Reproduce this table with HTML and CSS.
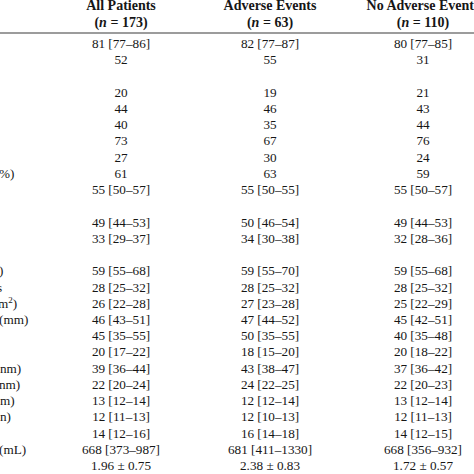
FILE: index.html
```html
<!DOCTYPE html>
<html>
<head>
<meta charset="utf-8">
<link rel="stylesheet" href="styles.css">
</head>
<body>
<table class="tbl">
  <colgroup>
    <col class="c-label">
    <col class="c-all">
    <col class="c-ae">
    <col class="c-nae">
  </colgroup>
  <thead>
    <tr>
      <th></th>
      <th>All Patients<br>(<i>n</i> = 173)</th>
      <th>Adverse Events<br>(<i>n</i> = 63)</th>
      <th>No Adverse Events<br>(<i>n</i> = 110)</th>
    </tr>
  </thead>
  <tbody>
    <tr class="first"><td></td><td>81 [77–86]</td><td>82 [77–87]</td><td>80 [77–85]</td></tr>
    <tr><td></td><td>52</td><td>55</td><td>31</td></tr>
    <tr><td></td><td></td><td></td><td></td></tr>
    <tr><td></td><td>20</td><td>19</td><td>21</td></tr>
    <tr><td></td><td>44</td><td>46</td><td>43</td></tr>
    <tr><td></td><td>40</td><td>35</td><td>44</td></tr>
    <tr><td></td><td>73</td><td>67</td><td>76</td></tr>
    <tr><td></td><td>27</td><td>30</td><td>24</td></tr>
    <tr><td class="lab cut1">%)</td><td>61</td><td>63</td><td>59</td></tr>
    <tr><td></td><td>55 [50–57]</td><td>55 [50–55]</td><td>55 [50–57]</td></tr>
    <tr><td></td><td></td><td></td><td></td></tr>
    <tr><td></td><td>49 [44–53]</td><td>50 [46–54]</td><td>49 [44–53]</td></tr>
    <tr><td></td><td>33 [29–37]</td><td>34 [30–38]</td><td>32 [28–36]</td></tr>
    <tr><td></td><td></td><td></td><td></td></tr>
    <tr><td class="lab cut1">)</td><td>59 [55–68]</td><td>59 [55–70]</td><td>59 [55–68]</td></tr>
    <tr><td class="lab cut3">s</td><td>28 [25–32]</td><td>28 [25–32]</td><td>28 [25–32]</td></tr>
    <tr><td class="lab cut2">m<sup class="sup">2</sup>)</td><td>26 [22–28]</td><td>27 [23–28]</td><td>25 [22–29]</td></tr>
    <tr><td class="lab cut1">(mm)</td><td>46 [43–51]</td><td>47 [44–52]</td><td>45 [42–51]</td></tr>
    <tr><td></td><td>45 [35–55]</td><td>50 [35–55]</td><td>40 [35–48]</td></tr>
    <tr><td></td><td>20 [17–22]</td><td>18 [15–20]</td><td>20 [18–22]</td></tr>
    <tr><td class="lab">nm)</td><td>39 [36–44]</td><td>43 [38–47]</td><td>37 [36–42]</td></tr>
    <tr><td class="lab cut1">nm)</td><td>22 [20–24]</td><td>24 [22–25]</td><td>22 [20–23]</td></tr>
    <tr><td class="lab">m)</td><td>13 [12–14]</td><td>12 [12–14]</td><td>13 [12–14]</td></tr>
    <tr><td class="lab">n)</td><td>12 [11–13]</td><td>12 [10–13]</td><td>12 [11–13]</td></tr>
    <tr><td></td><td>14 [12–16]</td><td>16 [14–18]</td><td>14 [12–15]</td></tr>
    <tr><td class="lab cut1">(mL)</td><td>668 [373–987]</td><td>681 [411–1330]</td><td>668 [356–932]</td></tr>
    <tr><td></td><td>1.96 ± 0.75</td><td>2.38 ± 0.83</td><td>1.72 ± 0.57</td></tr>
  </tbody>
</table>
</body>
</html>
```

FILE: styles.css
```css
html, body {
  margin: 0;
  padding: 0;
  overflow: hidden;
  background: #ffffff;
}

body {
  font-family: "Liberation Serif", "Times New Roman", serif;
  color: #161616;
}

.tbl {
  border-collapse: collapse;
  table-layout: fixed;
  width: 502px;
  margin-top: -3px;
}

.c-label { width: 46px; }
.c-all { width: 150px; }
.c-ae { width: 148px; }
.c-nae { width: 158px; }

.tbl th {
  font-size: 14px;
  font-weight: bold;
  line-height: 17px;
  padding: 0 0 1px 0;
  text-align: center;
  white-space: nowrap;
  border-bottom: 2px solid #9c9c9c;
  color: #161616;
}

.tbl td {
  font-size: 13.2px;
  line-height: 16.23px;
  padding: 0;
  text-align: center;
  white-space: nowrap;
}

.tbl td:empty::before {
  content: "\00a0";
}

.tbl tr.first td {
  padding-top: 2px;
}

.tbl td.lab {
  text-align: left;
  overflow: hidden;
}

.sup {
  font-size: 9px;
  line-height: 0;
  vertical-align: 5px;
}

.cut1 { text-indent: -1px; }
.cut2 { text-indent: -2px; }
.cut3 { text-indent: -3px; }
```
